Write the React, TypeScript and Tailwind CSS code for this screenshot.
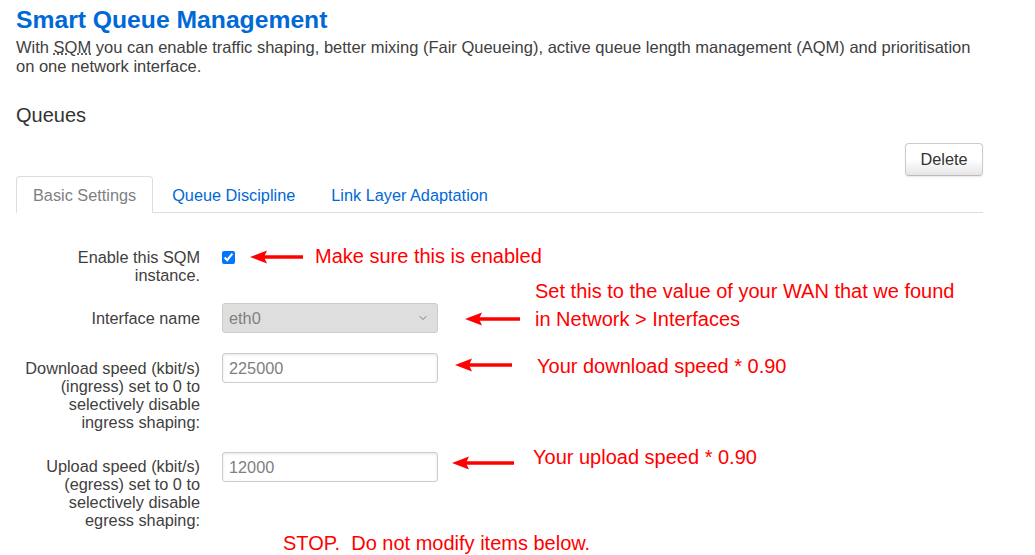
import { ChevronDown } from 'lucide-react';

const font = "font-['Liberation_Sans',Arial,sans-serif]";

function Arrow({ width }: { width: number }) {
  return (
    <svg width={width} height={14} viewBox={`0 0 ${width} 14`} className="block">
      <line x1={12} y1={7} x2={width} y2={7} stroke="#ff0000" strokeWidth={3.5} />
      <polygon points="0,7 17,0.5 14,7 17,13.5" fill="#ff0000" />
    </svg>
  );
}

function Note({ children, className }: { children: React.ReactNode; className?: string }) {
  return <div className={`text-[20px] text-[#ff0000] ${className ?? ''}`}>{children}</div>;
}

function Row({
  label,
  className,
  labelClass,
  children,
}: {
  label: string;
  className?: string;
  labelClass?: string;
  children: React.ReactNode;
}) {
  return (
    <div className={`flex items-start ${className ?? ''}`}>
      <div className={`w-[184px] shrink-0 pl-[4px] text-right leading-[18px] text-[#404040] ${labelClass ?? ''}`}>
        {label}
      </div>
      <div className="ml-[22px] flex items-start">{children}</div>
    </div>
  );
}

const inputCls =
  'h-[30px] w-[216px] rounded-[3px] border border-[#cccccc] bg-white px-[6px] leading-[28px] text-[#808080] shadow-[inset_0_1px_3px_rgba(0,0,0,0.1)]';

export default function App() {
  return (
    <div className={`min-h-[555px] bg-white ${font} text-[16.3px] text-[#404040]`}>
      <div className="ml-4 w-[967px] pt-[5px]">
        <h2 className="text-[24.7px] font-bold leading-[30px] text-[#0069d6]">Smart Queue Management</h2>
        <p className="mt-[3px] w-[955px] text-[16.5px] leading-[18.6px]">
          With{' '}
          <abbr title="Smart Queue Management" className="underline decoration-dotted">
            SQM
          </abbr>{' '}
          you can enable traffic shaping, better mixing (Fair Queueing), active queue length management (AQM)
          and prioritisation on one network interface.
        </p>

        <h3 className="mt-[28px] text-[20px] leading-[24px] text-[#333333]">Queues</h3>

        <div className="mt-[16px] flex justify-end">
          <button className="h-[33px] w-[78px] rounded-[4px] border border-[#cccccc] border-b-[#bbbbbb] bg-gradient-to-b from-white via-white to-[#e6e6e6] text-[16.3px] text-[#333333] shadow-[0_1px_2px_rgba(0,0,0,0.1)]">
            Delete
          </button>
        </div>

        <ul className="flex gap-[2px] border-b border-[#dddddd]">
          <li className="-mb-px rounded-t-[4px] border border-[#dddddd] border-b-white bg-white px-4 pt-[8px] pb-[7px] leading-[20px] text-[#808080]">
            Basic Settings
          </li>
          <li className="-mb-px border border-transparent px-4 pt-[8px] pb-[7px] leading-[20px] text-[#0069d6]">
            Queue Discipline
          </li>
          <li className="-mb-px border border-transparent px-4 pt-[8px] pb-[7px] leading-[20px] text-[#0069d6]">
            Link Layer Adaptation
          </li>
        </ul>

        <Row label="Enable this SQM instance." className="mt-[35px]">
          <input
            type="checkbox"
            checked
            readOnly
            className="m-0 mt-[3px] h-[13px] w-[13px] accent-[#0075ff]"
          />
          <div className="ml-[15px] mt-[2px]">
            <Arrow width={53} />
          </div>
          <Note className="ml-[12px] -mt-[4px] leading-[24px]">Make sure this is enabled</Note>
        </Row>

        <Row label="Interface name" className="mt-[19px]" labelClass="pt-[6px]">
          <div className="flex h-[30px] w-[216px] items-center justify-between rounded-[3px] border border-[#cccccc] bg-[#dedede] pl-[6px] pr-[8px] text-[#808080]">
            <span>eth0</span>
            <ChevronDown size={12} strokeWidth={2} className="text-[#7a7a7a]" />
          </div>
          <div className="ml-[27px] mt-[9px]">
            <Arrow width={55} />
          </div>
          <Note className="ml-[15px] -mt-[26px] leading-[28px]">
            Set this to the value of your WAN that we found
            <br />
            in Network &gt; Interfaces
          </Note>
        </Row>

        <Row
          label="Download speed (kbit/s) (ingress) set to 0 to selectively disable ingress shaping:"
          className="mt-[20px]"
          labelClass="pt-[6px]"
        >
          <div className={inputCls}>225000</div>
          <div className="ml-[17px] mt-[5px]">
            <Arrow width={57} />
          </div>
          <Note className="ml-[25px] mt-[1px] leading-[24px]">Your download speed * 0.90</Note>
        </Row>

        <Row
          label="Upload speed (kbit/s) (egress) set to 0 to selectively disable egress shaping:"
          className="mt-[21px]"
          labelClass="pt-[5px]"
        >
          <div className={inputCls}>12000</div>
          <div className="ml-[14px] mt-[4px]">
            <Arrow width={62} />
          </div>
          <Note className="ml-[19px] -mt-[7px] leading-[24px]">Your upload speed * 0.90</Note>
        </Row>

        <Note className="ml-[267px] mt-[2px] whitespace-pre leading-[24px]">STOP.  Do not modify items below.</Note>
      </div>
    </div>
  );
}
